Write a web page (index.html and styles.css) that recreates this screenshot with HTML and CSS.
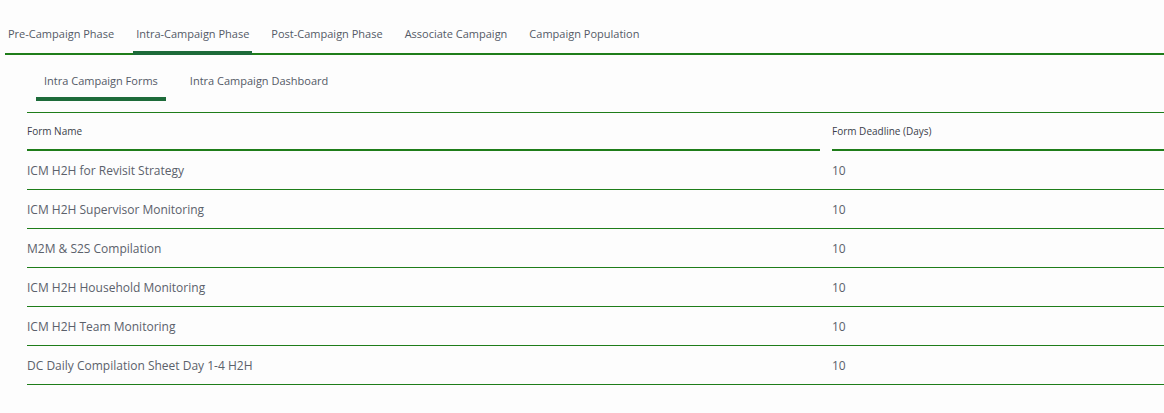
FILE: index.html
```html
<!DOCTYPE html>
<html lang="en">
<head>
  <meta charset="UTF-8">
  <title>Intra-Campaign Phase</title>
  <link rel="stylesheet" href="styles.css">
</head>
<body>
  <div class="page">
    <ul class="phase-tabs">
      <li class="phase-tab">Pre-Campaign Phase</li>
      <li class="phase-tab active">Intra-Campaign Phase</li>
      <li class="phase-tab">Post-Campaign Phase</li>
      <li class="phase-tab">Associate Campaign</li>
      <li class="phase-tab">Campaign Population</li>
    </ul>

    <div class="content">
      <ul class="sub-tabs">
        <li class="sub-tab active">Intra Campaign Forms</li>
        <li class="sub-tab">Intra Campaign Dashboard</li>
      </ul>

      <div class="forms-table">
        <div class="table-head">
          <div class="th">Form Name</div>
          <div class="th">Form Deadline (Days)</div>
        </div>
        <div class="table-row">
          <div class="td">ICM H2H for Revisit Strategy</div>
          <div class="td">10</div>
        </div>
        <div class="table-row">
          <div class="td">ICM H2H Supervisor Monitoring</div>
          <div class="td">10</div>
        </div>
        <div class="table-row">
          <div class="td">M2M &amp; S2S Compilation</div>
          <div class="td">10</div>
        </div>
        <div class="table-row">
          <div class="td">ICM H2H Household Monitoring</div>
          <div class="td">10</div>
        </div>
        <div class="table-row">
          <div class="td">ICM H2H Team Monitoring</div>
          <div class="td">10</div>
        </div>
        <div class="table-row">
          <div class="td">DC Daily Compilation Sheet Day 1-4 H2H</div>
          <div class="td">10</div>
        </div>
      </div>
    </div>
  </div>
</body>
</html>
```

FILE: styles.css
```css
body {
  margin: 0;
  font-family: "Open Sans", sans-serif;
  background-color: #fdfdfd;
  color: #5b616b;
}
.page {
  padding: 20px 0 0 5px;
}
.phase-tabs {
  display: flex;
  gap: 16px;
  list-style: none;
  margin: 0;
  padding: 0;
  border-bottom: 2px solid #1f7d1a;
}
.phase-tab {
  font-size: 11px;
  line-height: 15px;
  padding: 6px 3px 10px;
  margin-bottom: -2px;
  color: #545a66;
  border-bottom: 4px solid transparent;
  cursor: pointer;
}
.phase-tab.active {
  border-bottom-color: #1d6b3a;
}
.content {
  padding-left: 22px;
}
.sub-tabs {
  display: flex;
  gap: 16px;
  list-style: none;
  margin: 0;
  padding: 18px 0 0 9px;
  border-bottom: 1px solid #1f7d1a;
}
.sub-tab {
  font-size: 11px;
  line-height: 15px;
  padding: 0 8px 9px;
  margin-bottom: 11px;
  color: #545a66;
  border-bottom: 4px solid transparent;
  cursor: pointer;
}
.sub-tab.active {
  border-bottom-color: #1d6b3a;
}
.table-head,
.table-row {
  display: grid;
  grid-template-columns: 793px 1fr;
}
.table-head {
  column-gap: 12px;
}
.th {
  font-size: 10px;
  line-height: 14px;
  padding: 11px 0;
  color: #3b404a;
  border-bottom: 2px solid #1f7d1a;
}
.table-row {
  border-bottom: 1px solid #1f7d1a;
}
.table-row .td:last-child {
  padding-left: 12px;
}
.td {
  font-size: 12px;
  line-height: 16px;
  padding: 12px 0 10px;
  color: #5b616b;
}
```
